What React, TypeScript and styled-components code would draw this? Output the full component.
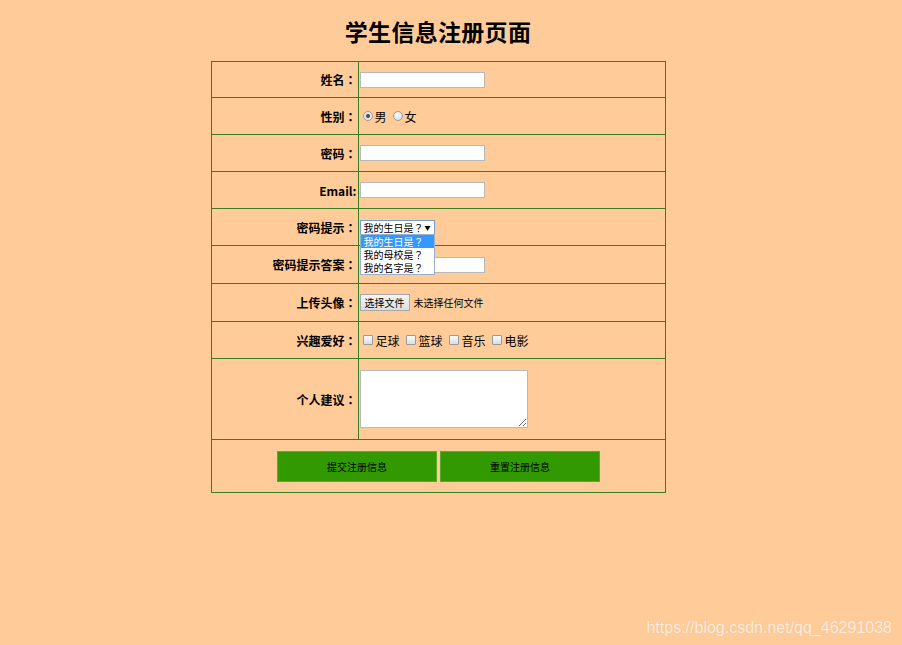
import styled, { createGlobalStyle } from 'styled-components';

const GlobalStyle = createGlobalStyle`
  html, body {
    margin: 0;
    padding: 0;
    background: #ffcc99;
    height: 100%;
  }
  body {
    font-family: 'Noto Sans CJK SC', 'Liberation Sans', sans-serif;
    color: #000;
  }
`;

const Page = styled.div`
  position: relative;
  width: 902px;
  height: 645px;
  overflow: hidden;
`;

const Wrapper = styled.div`
  width: 876px;
  display: flex;
  flex-direction: column;
  align-items: center;
`;

const Title = styled.h1`
  margin: 0;
  height: 61px;
  display: flex;
  align-items: center;
  font-size: 23px;
  font-weight: bold;
  letter-spacing: 0.3px;
`;

const FormTable = styled.table`
  width: 455px;
  border-collapse: collapse;
  table-layout: fixed;
  td {
    border: 1px solid #3a7d1e;
    padding: 0 1px;
  }
`;

const Row = styled.tr<{ $h: number }>`
  height: ${p => p.$h}px;
`;

const Label = styled.td`
  width: 144px;
  text-align: right;
  font-size: 12px;
  font-weight: bold;
  vertical-align: middle;
  white-space: nowrap;
`;

// full-width punctuation sits centred in the TC font, as in the reference
const Punct = styled.span`
  font-family: 'Noto Sans CJK TC', sans-serif;
`;

const Field = styled.td`
  vertical-align: middle;
  font-size: 12px;
`;

const TextInput = styled.input`
  box-sizing: border-box;
  width: 125px;
  height: 16px;
  border: 1px solid #b8b8b8;
  background: #fff;
  padding: 0 2px;
  margin: 0;
  display: block;
`;

const Choice = styled.label`
  display: inline-flex;
  align-items: center;
  font-size: 12px;
  margin-right: 3px;
  gap: 2px;
`;

const RadioDot = styled.span<{ $on?: boolean }>`
  width: 8px;
  height: 8px;
  margin-left: 3px;
  border-radius: 50%;
  border: 1px solid #9a9a9a;
  background: ${p =>
    p.$on
      ? 'radial-gradient(circle, #555 0 1.8px, #e8e8e8 2.3px)'
      : 'radial-gradient(circle at 40% 35%, #fafafa, #d4d4d4)'};
  box-sizing: content-box;
`;

const CheckBox = styled.span`
  width: 8px;
  height: 8px;
  margin-left: 3px;
  margin-right: 1px;
  border: 1px solid #9a9a9a;
  border-radius: 1px;
  background: linear-gradient(#fdfdfd, #dcdcdc);
`;

const SelectWrap = styled.div`
  position: relative;
  width: 75px;
`;

const SelectBox = styled.div`
  box-sizing: border-box;
  height: 15px;
  border: 1px solid #7a9ccf;
  background: #fff;
  font-size: 10px;
  line-height: 13px;
  padding: 0 3px;
  display: flex;
  justify-content: space-between;
  align-items: center;
`;

const Arrow = styled.span`
  font-size: 6px;
  line-height: 13px;
`;

const OptionList = styled.ul`
  position: absolute;
  top: 14px;
  left: 0;
  width: 75px;
  box-sizing: border-box;
  margin: 0;
  padding: 0;
  list-style: none;
  border: 1px solid #9bb0d0;
  background: #fff;
  z-index: 2;
`;

const OptionItem = styled.li<{ $active?: boolean }>`
  height: 13px;
  line-height: 13px;
  font-size: 10px;
  padding: 0 3px;
  white-space: nowrap;
  background: ${p => (p.$active ? '#3399ff' : '#fff')};
  color: ${p => (p.$active ? '#fff' : '#000')};
`;

const FileRow = styled.div`
  display: flex;
  align-items: center;
  gap: 4px;
  font-size: 10px;
`;

const FileButton = styled.button`
  font-family: inherit;
  font-size: 10px;
  height: 17px;
  padding: 0 4px;
  border: 1px solid #a8a8a8;
  background: linear-gradient(#f4f4f4, #dedede);
  color: #000;
  line-height: 15px;
`;

const TextArea = styled.textarea`
  box-sizing: border-box;
  width: 168px;
  height: 58px;
  border: 1px solid #b8b8b8;
  display: block;
  margin: 0;
`;

const ButtonCell = styled.td`
  vertical-align: middle;
`;

const ButtonRow = styled.div`
  display: flex;
  justify-content: center;
  gap: 3px;
  padding-left: 1px;
`;

const GreenButton = styled.button`
  width: 160px;
  height: 31px;
  background: #339900;
  border: 1px solid #5aaa2c;
  font-family: inherit;
  font-size: 10px;
  color: #000;
  padding: 0;
`;

const Watermark = styled.div`
  position: absolute;
  right: 10px;
  bottom: 8px;
  font-family: 'Liberation Sans', Arial, sans-serif;
  font-size: 16px;
  color: rgba(255, 255, 255, 0.75);
  text-shadow: 0 0 1px rgba(200, 150, 100, 0.4);
`;

const hobbies = ['足球', '篮球', '音乐', '电影'];
const hints = ['我的生日是', '我的母校是', '我的名字是'];

function Hint({ text }: { text: string }) {
  return (
    <span>
      {text}
      <Punct>？</Punct>
    </span>
  );
}

export default function App() {
  return (
    <Page>
      <GlobalStyle />
      <Wrapper>
        <Title>学生信息注册页面</Title>
        <FormTable>
          <colgroup>
            <col style={{ width: 147 }} />
            <col />
          </colgroup>
          <tbody>
            <Row $h={36}>
              <Label>
                姓名<Punct>：</Punct>
              </Label>
              <Field>
                <TextInput type='text' />
              </Field>
            </Row>
            <Row $h={37}>
              <Label>
                性别<Punct>：</Punct>
              </Label>
              <Field>
                <Choice>
                  <RadioDot $on />男
                </Choice>
                <Choice>
                  <RadioDot />女
                </Choice>
              </Field>
            </Row>
            <Row $h={37}>
              <Label>
                密码<Punct>：</Punct>
              </Label>
              <Field>
                <TextInput type='password' />
              </Field>
            </Row>
            <Row $h={37}>
              <Label>Email:</Label>
              <Field>
                <TextInput type='text' />
              </Field>
            </Row>
            <Row $h={37}>
              <Label>
                密码提示<Punct>：</Punct>
              </Label>
              <Field>
                <SelectWrap>
                  <SelectBox>
                    <Hint text={hints[0]} />
                    <Arrow>▼</Arrow>
                  </SelectBox>
                  <OptionList>
                    {hints.map((h, i) => (
                      <OptionItem key={h} $active={i === 0}>
                        <Hint text={h} />
                      </OptionItem>
                    ))}
                  </OptionList>
                </SelectWrap>
              </Field>
            </Row>
            <Row $h={38}>
              <Label>
                密码提示答案<Punct>：</Punct>
              </Label>
              <Field>
                <TextInput type='text' />
              </Field>
            </Row>
            <Row $h={38}>
              <Label>
                上传头像<Punct>：</Punct>
              </Label>
              <Field>
                <FileRow>
                  <FileButton>选择文件</FileButton>
                  <span>未选择任何文件</span>
                </FileRow>
              </Field>
            </Row>
            <Row $h={37}>
              <Label>
                兴趣爱好<Punct>：</Punct>
              </Label>
              <Field>
                {hobbies.map(h => (
                  <Choice key={h}>
                    <CheckBox />
                    {h}
                  </Choice>
                ))}
              </Field>
            </Row>
            <Row $h={81}>
              <Label>
                个人建议<Punct>：</Punct>
              </Label>
              <Field>
                <TextArea />
              </Field>
            </Row>
            <Row $h={53}>
              <ButtonCell colSpan={2}>
                <ButtonRow>
                  <GreenButton>提交注册信息</GreenButton>
                  <GreenButton>重置注册信息</GreenButton>
                </ButtonRow>
              </ButtonCell>
            </Row>
          </tbody>
        </FormTable>
      </Wrapper>
      <Watermark>https://blog.csdn.net/qq_46291038</Watermark>
    </Page>
  );
}
